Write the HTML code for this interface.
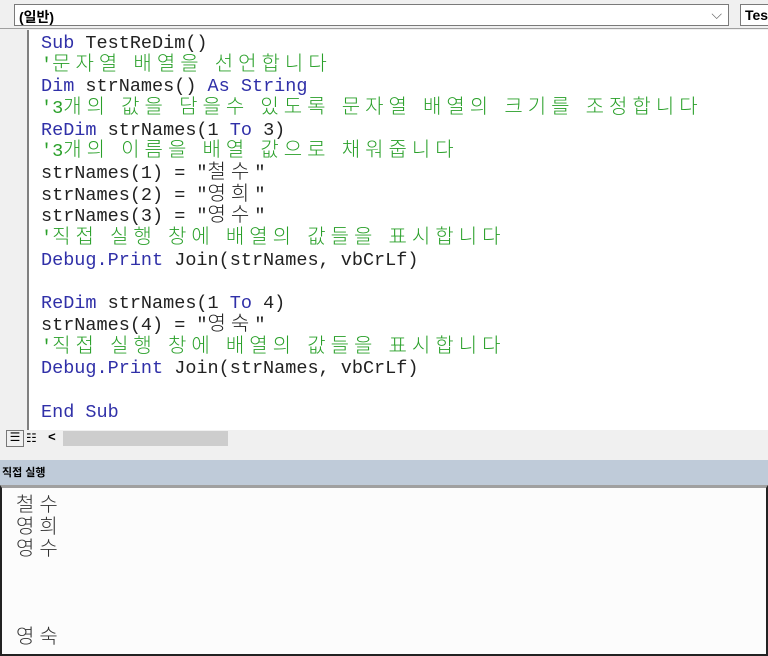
<!DOCTYPE html>
<html><head><meta charset="utf-8"><style>
*{margin:0;padding:0;box-sizing:border-box}
body{width:768px;height:656px;overflow:hidden;background:#f0f0f0;position:relative;font-family:"Liberation Mono","Noto Sans CJK KR",monospace}
.abs{position:absolute}
#top{left:0;top:0;width:768px;height:29px;background:#f0f0f0;border-bottom:1px solid #a0a0a0}
.cb{position:absolute;top:4px;height:22px;background:#fff;border:1px solid #7a7a7a;font:bold 14px "Liberation Sans","Noto Sans CJK KR",sans-serif;padding:2px 4px;color:#000}
#code{left:2px;top:30px;width:766px;height:400px;background:#fff}
#gut{left:2px;top:30px;width:27px;height:400px;background:#f0f0f0;border-right:2px solid #808080}
.ln{position:absolute;left:41px;font-size:18.5px;white-space:pre;line-height:22px;color:#222}
.ln .h{letter-spacing:5px;font-weight:300;font-size:20px;line-height:20px}
.k{color:#3030a8}.c{color:#2aa02a}
#sb{left:2px;top:430px;width:766px;height:19px;background:#f0f0f0}
#hdr{left:0;top:460px;width:768px;height:25px;background:#bfcbd9;font:bold 11px "Liberation Sans","Noto Sans CJK KR",sans-serif;padding:4px 2px;color:#000}
#imm{left:0;top:485px;width:768px;height:171px;background:#fcfcfc;border-top:3px solid #a0a0a0;border-left:2px solid #222;border-right:2px solid #222;border-bottom:2px solid #222}
.im{position:absolute;left:14px;font-size:20px;line-height:22px;color:#333;letter-spacing:5px;font-family:"Noto Sans CJK KR",sans-serif;font-weight:300}
</style></head><body>
<div id="top" class="abs">
<div class="cb" style="left:14px;width:715px">(일반)<span style="position:absolute;right:6px;top:1px;font-weight:normal;color:#666">⌵</span></div>
<div class="cb" style="left:740px;width:40px">Tes</div>
</div>
<div id="code" class="abs"></div>
<div id="gut" class="abs"></div>
<div class="ln" style="top:33px"><span class="k">Sub</span> TestReDim()</div>
<div class="ln c" style="top:55px">'<span class="h">문자열</span> <span class="h">배열을</span> <span class="h">선언합니다</span></div>
<div class="ln" style="top:76px"><span class="k">Dim</span> strNames() <span class="k">As</span> <span class="k">String</span></div>
<div class="ln c" style="top:98px">'3<span class="h">개의</span> <span class="h">값을</span> <span class="h">담을수</span> <span class="h">있도록</span> <span class="h">문자열</span> <span class="h">배열의</span> <span class="h">크기를</span> <span class="h">조정합니다</span></div>
<div class="ln" style="top:120px"><span class="k">ReDim</span> strNames(1 <span class="k">To</span> 3)</div>
<div class="ln c" style="top:141px">'3<span class="h">개의</span> <span class="h">이름을</span> <span class="h">배열</span> <span class="h">값으로</span> <span class="h">채워줍니다</span></div>
<div class="ln" style="top:163px">strNames(1) = "<span class="h">철수</span>"</div>
<div class="ln" style="top:185px">strNames(2) = "<span class="h">영희</span>"</div>
<div class="ln" style="top:206px">strNames(3) = "<span class="h">영수</span>"</div>
<div class="ln c" style="top:228px">'<span class="h">직접</span> <span class="h">실행</span> <span class="h">창에</span> <span class="h">배열의</span> <span class="h">값들을</span> <span class="h">표시합니다</span></div>
<div class="ln" style="top:250px"><span class="k">Debug.Print</span> Join(strNames, vbCrLf)</div>
<div class="ln" style="top:293px"><span class="k">ReDim</span> strNames(1 <span class="k">To</span> 4)</div>
<div class="ln" style="top:315px">strNames(4) = "<span class="h">영숙</span>"</div>
<div class="ln c" style="top:337px">'<span class="h">직접</span> <span class="h">실행</span> <span class="h">창에</span> <span class="h">배열의</span> <span class="h">값들을</span> <span class="h">표시합니다</span></div>
<div class="ln" style="top:358px"><span class="k">Debug.Print</span> Join(strNames, vbCrLf)</div>
<div class="ln" style="top:402px"><span class="k">End Sub</span></div>
<div id="sb" class="abs">
<div class="abs" style="left:4px;top:0;width:18px;height:17px;border:1px solid #777;font-size:12px;text-align:center;line-height:14px">☰</div>
<div class="abs" style="left:24px;top:1px;font-size:12px">☷</div>
<div class="abs" style="left:46px;top:0;font-size:13px;font-weight:bold">&lt;</div>
<div class="abs" style="left:61px;top:1px;width:165px;height:15px;background:#cdcdcd"></div>
</div>
<div id="hdr" class="abs">직접 실행</div>
<div id="imm" class="abs">
<div class="im" style="top:4px">철수</div>
<div class="im" style="top:26px">영희</div>
<div class="im" style="top:48px">영수</div>
<div class="im" style="top:136px">영숙</div>
</div>
</body></html>
